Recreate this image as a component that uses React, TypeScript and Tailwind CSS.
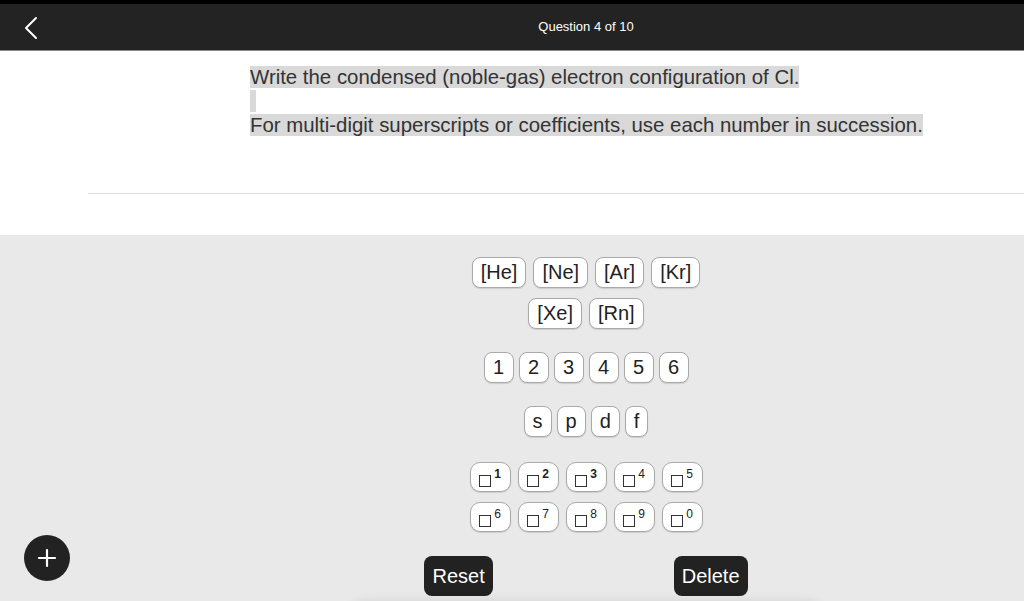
import React from "react";

const font = { fontFamily: '"Liberation Sans", Arial, sans-serif' };

const gases = [["[He]", "[Ne]", "[Ar]", "[Kr]"], ["[Xe]", "[Rn]"]];
const digits = ["1", "2", "3", "4", "5", "6"];
const orbitals = ["s", "p", "d", "f"];
const supers = [
  ["1", "2", "3", "4", "5"],
  ["6", "7", "8", "9", "0"],
];

const Key: React.FC<{ children: React.ReactNode; wide?: boolean }> = ({ children, wide }) => (
  <button
    className={
      "bg-white border border-[#a9a9a9] rounded-[8px] px-[8px] py-[3px] text-[20px] leading-[23px] text-[#222] shadow-[0_1px_1px_rgba(0,0,0,0.12)] " +
      (wide ? "min-w-[30px]" : "")
    }
  >
    {children}
  </button>
);

const SuperKey: React.FC<{ n: string }> = ({ n }) => {
  const bold = n === "1" || n === "2" || n === "3";
  return (
    <button className="w-[41px] h-[30px] bg-white border border-[#a9a9a9] rounded-[10px] flex items-center justify-center shadow-[0_1px_1px_rgba(0,0,0,0.12)]">
      <span className="w-[12px] h-[12px] border border-[#333] mt-[7px]" />
      <span
        className={
          "ml-[3px] -mt-[6px] text-[12px] leading-none text-[#222] " +
          (bold ? "font-bold" : "font-normal")
        }
      >
        {n}
      </span>
    </button>
  );
};

export default function App() {
  return (
    <div className="w-[1024px] min-h-[601px] bg-white overflow-hidden" style={font}>
      {/* header */}
      <div className="bg-black pt-[4px]">
        <div className="h-[47px] bg-[#232323] border-b border-[#8a8a8a] flex items-center relative">
          <button className="absolute left-[24px] top-[12px]">
            <svg width="14" height="24" viewBox="0 0 14 24">
              <polyline
                points="12,2 2,12 12,22"
                fill="none"
                stroke="#fff"
                strokeWidth="2"
                strokeLinecap="round"
                strokeLinejoin="round"
              />
            </svg>
          </button>
          <div className="ml-[148px] flex-1 text-center text-white text-[13px]">
            Question 4 of 10
          </div>
        </div>
      </div>

      {/* question */}
      <div className="pt-[14px] pl-[250px] text-[20.4px] leading-[24px] text-[#333]">
        <span className="bg-[#d9d9d9]">
          Write the condensed (noble-gas) electron configuration of Cl.
        </span>
        <br />
        <span className="bg-[#d9d9d9]">&nbsp;</span>
        <br />
        <span className="bg-[#d9d9d9]">
          For multi-digit superscripts or coefficients, use each number in succession.
        </span>
      </div>

      <div className="mt-[56px] ml-[88px] h-px bg-[#dcdcdc]" />

      {/* keypad */}
      <div className="mt-[41px] bg-[#e9e9e9] relative pt-[22px] pb-[40px]">
        <div className="ml-[148px] flex flex-col items-center">
          <div className="flex flex-col items-center gap-[10px]">
            {gases.map((row, i) => (
              <div key={i} className="flex gap-[7px]">
                {row.map((g) => (
                  <Key key={g}>{g}</Key>
                ))}
              </div>
            ))}
          </div>

          <div className="mt-[23px] flex gap-[5px]">
            {digits.map((d) => (
              <Key key={d} wide>
                {d}
              </Key>
            ))}
          </div>

          <div className="mt-[23px] flex gap-[5px]">
            {orbitals.map((o) => (
              <Key key={o}>{o}</Key>
            ))}
          </div>

          <div className="mt-[25px] flex flex-col gap-[10px]">
            {supers.map((row, i) => (
              <div key={i} className="flex gap-[7px]">
                {row.map((n) => (
                  <SuperKey key={n} n={n} />
                ))}
              </div>
            ))}
          </div>

          <div className="mt-[24px] flex gap-[181px]">
            <button className="h-[40px] px-[8px] rounded-[8px] bg-[#222] text-white text-[20px]">
              Reset
            </button>
            <button className="h-[40px] px-[8px] rounded-[8px] bg-[#222] text-white text-[20px]">
              Delete
            </button>
          </div>

          <div className="mt-[8px] w-[480px] h-[30px] rounded-t-[20px] bg-[#e9e9e9] shadow-[0_-4px_10px_rgba(0,0,0,0.08)]" />
        </div>

        <button className="absolute left-[24px] top-[300px] w-[46px] h-[46px] rounded-full bg-[#222] flex items-center justify-center">
          <svg width="20" height="20" viewBox="0 0 20 20">
            <path d="M10 2v16M2 10h16" stroke="#fff" strokeWidth="2.2" strokeLinecap="round" />
          </svg>
        </button>
      </div>
    </div>
  );
}
